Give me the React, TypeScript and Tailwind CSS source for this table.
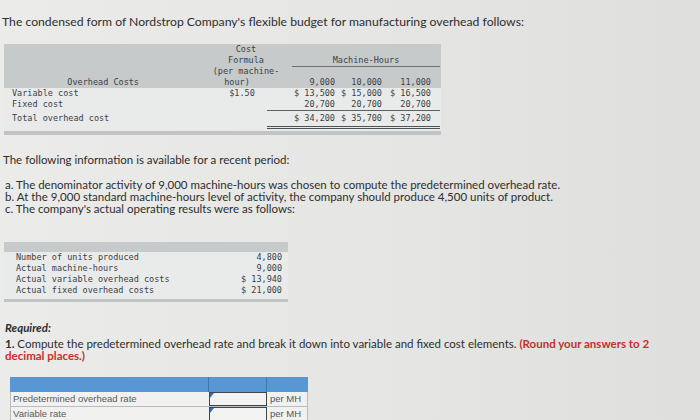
const mono = "font-['DejaVu_Sans_Mono','Liberation_Mono',monospace]";

const budgetRows = [
  { label: 'Variable cost', formula: '$1.50', a: '$ 13,500', b: '$ 15,000', c: '$ 16,500' },
  { label: 'Fixed cost', formula: '', a: '20,700', b: '20,700', c: '20,700' },
];

const actuals = [
  ['Number of units produced', '4,800'],
  ['Actual machine-hours', '9,000'],
  ['Actual variable overhead costs', '$ 13,940'],
  ['Actual fixed overhead costs', '$ 21,000'],
];

const NumCols = ({ a, b, c }: { a: string; b: string; c: string }) => (
  <>
    <div className="w-[43px] text-right whitespace-nowrap">{a}</div>
    <div className="w-[47px] text-right whitespace-nowrap">{b}</div>
    <div className="w-[49px] text-right whitespace-nowrap">{c}</div>
  </>
);

const AnswerRow = ({ label }: { label: string }) => (
  <div className="flex h-[15px] bg-[#f1f1f0] border-b border-[#b9bcbe]">
    <div className="w-[199px] pl-[2px] border-l border-[#b9bcbe] leading-[14px] text-[#5a5a5a]">{label}</div>
    <div className="relative w-[58px] border-[1.5px] border-[#3f4650] bg-[#f3f3f2]">
      <div className="absolute left-0 top-0 w-0 h-0 border-t-[5px] border-t-[#3a6fb0] border-r-[4px] border-r-transparent" />
    </div>
    <div className="w-[41px] pl-[3px] border-r border-[#b9bcbe] leading-[14px] text-[#555]">per MH</div>
  </div>
);

export default function App() {
  return (
    <div className="w-[700px] h-[420px] overflow-hidden bg-gradient-to-r from-[#ebebe9] via-[#e6e6e4] to-[#dfdfdd] text-[#2e2e2e] font-['Lato','Open_Sans',sans-serif]">
      <p className="pt-[15px] pl-[2px] text-[12.2px] leading-[14px] whitespace-nowrap">
        The condensed form of Nordstrop Company&apos;s flexible budget for manufacturing overhead follows:
      </p>

      {/* flexible budget table */}
      <div className={`mt-[15px] ml-[4px] w-[437px] text-[8.5px] text-[#3b3f44] ${mono}`}>
        <div className="flex h-[44px] bg-[#c6cacb] leading-[11px]">
          <div className="w-[196px] flex items-end">
            <div className="w-[141px] text-right pr-[6px]">Overhead Costs</div>
          </div>
          <div className="w-[92px] text-center">
            <div>Cost</div>
            <div>Formula</div>
            <div>(per machine-</div>
            <div className="pr-[18px]">hour)</div>
          </div>
          <div className="w-[149px] pt-[11px]">
            <div className="text-center border-b border-[#6d7276] mr-[1px]">Machine-Hours</div>
            <div className="flex mt-[10px]">
              <NumCols a="9,000" b="10,000" c="11,000" />
            </div>
          </div>
        </div>
        <div className="bg-[#e9ebea] leading-[11px]">
          {budgetRows.map((r) => (
            <div key={r.label} className="flex h-[11px]">
              <div className="w-[196px] pl-[8px]">{r.label}</div>
              <div className="w-[92px] text-center pr-[8px]">{r.formula}</div>
              <NumCols a={r.a} b={r.b} c={r.c} />
            </div>
          ))}
          <div className="ml-[263px] w-[173px] h-px bg-[#5d6266]" />
          <div className="flex h-[15px] pt-[2px]">
            <div className="w-[196px] pl-[8px]">Total overhead cost</div>
            <div className="w-[92px]" />
            <NumCols a="$ 34,200" b="$ 35,700" c="$ 37,200" />
          </div>
          <div className="ml-[263px] w-[173px] h-[3px] border-y border-[#4e5358]" />
          <div className="h-[2px]" />
          <div className="h-[4px] bg-[#c0c4c5]" />
        </div>
      </div>

      <div className="mt-[18px] text-[11.5px] leading-[12px]">
        <p className="pl-[3px] leading-[14px]">The following information is available for a recent period:</p>
        <div className="mt-[12px] pl-[5px]">
          <p>a. The denominator activity of 9,000 machine-hours was chosen to compute the predetermined overhead rate.</p>
          <p>b. At the 9,000 standard machine-hours level of activity, the company should produce 4,500 units of product.</p>
          <p>c. The company&apos;s actual operating results were as follows:</p>
        </div>
      </div>

      {/* actual results table */}
      <div className={`mt-[27px] ml-[4px] w-[284px] bg-[#e9ebea] text-[8.5px] leading-[11px] text-[#3b3f44] ${mono}`}>
        <div className="h-[10px] bg-[#c6cacb]" />
        {actuals.map(([label, value]) => (
          <div key={label} className="flex h-[11px] pl-[12px] pr-[6px]">
            <div className="flex-1">{label}</div>
            <div className="text-right">{value}</div>
          </div>
        ))}
        <div className="h-[3px]" />
        <div className="h-[3px] bg-[#c0c4c5]" />
      </div>

      <div className="mt-[20px] pl-[5px] text-[11.5px] leading-[12px]">
        <p className="italic font-bold">Required:</p>
        <p className="mt-[4px] whitespace-nowrap">
          <span className="font-bold">1.</span> Compute the predetermined overhead rate and break it down into variable and fixed cost elements.{' '}
          <span className="font-bold text-[#c4302b]">(Round your answers to 2</span>
        </p>
        <p className="font-bold text-[#c4302b]">decimal places.)</p>
      </div>

      {/* answer table */}
      <div className="mt-[15px] ml-[10px] w-[298px] text-[9.5px] font-['Liberation_Sans',Arial,sans-serif]">
        <div className="flex h-[15px] bg-[#5797d4]">
          <div className="w-[199px] border-r border-[#3f78b3]" />
          <div className="w-[58px] border-r border-[#3f78b3]" />
          <div className="w-[41px]" />
        </div>
        <AnswerRow label="Predetermined overhead rate" />
        <AnswerRow label="Variable rate" />
      </div>
    </div>
  );
}
